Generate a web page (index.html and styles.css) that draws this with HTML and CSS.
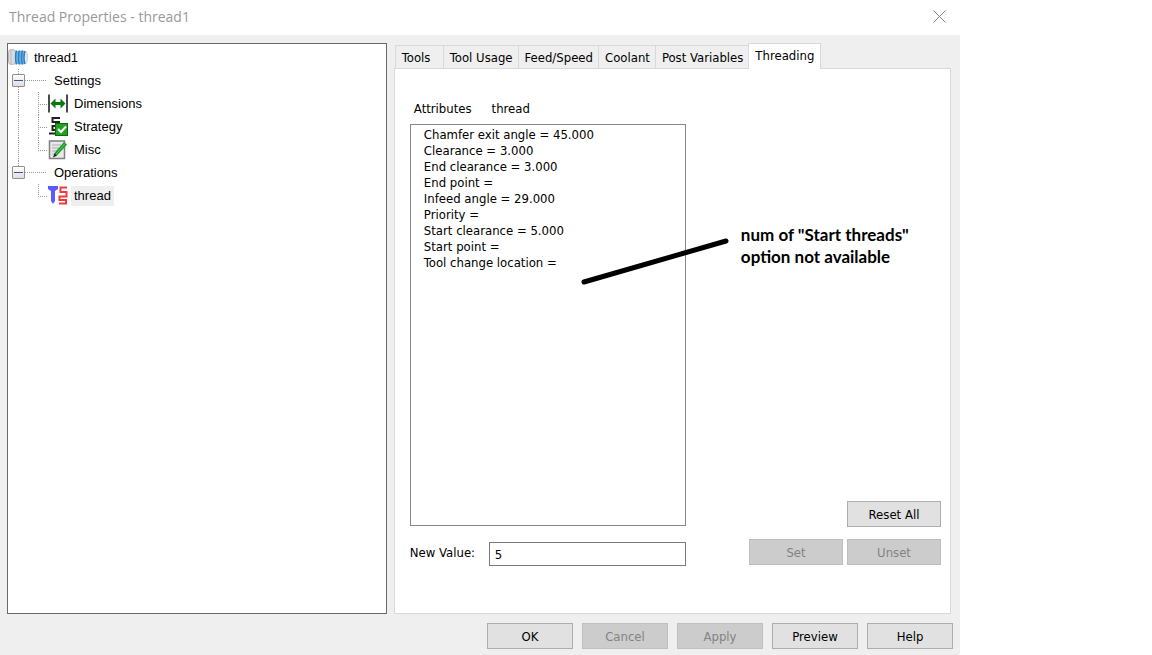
FILE: index.html
```html
<!DOCTYPE html>
<html lang="en">
<head>
  <meta charset="UTF-8" />
  <meta name="viewport" content="width=device-width, initial-scale=1" />
  <title>Thread Properties - thread1</title>
  <link rel="stylesheet" href="styles.css">
</head>
<body>

  <main class="window">
    <header class="title-bar">
      <h1>Thread Properties - thread1</h1>
      <button type="button" class="close" aria-label="Close">
        <svg width="13" height="13" viewBox="0 0 13 13"><path d="M.5 .5l12 12M12.5 .5l-12 12" stroke="#858585" fill="none"/></svg>
      </button>
    </header>

    <div class="content">
      <nav class="tree" aria-label="Features">
        <div class="row">
          <svg class="icon" viewBox="0 0 20 20">
            <rect x="8" y="3" width="11.500" height="13" rx="4" fill="#e4e8ea" stroke="#ccd2d6"/>
            <rect x="0.500" y="1.500" width="7" height="15" rx="3" fill="#dcdcdc" stroke="#b4b4b4"/>
            <path d="M3 2v14" stroke="#b8b8b8"/>
            <path d="M8 3h9q-2 6.500 0 13H8q-2-6.500 0-13z" fill="#6fb4e4"/>
            <path d="M8.500 2.500q-2 7 0 14M11.500 2.500q-2 7 0 14M14.500 2.500q-2 7 0 14M17 3q-2 6.500 0 13" stroke="#2a80c4" stroke-width="1.500" fill="none"/>
          </svg>
          <span class="label">thread1</span>
        </div>
        <ul>
          <li>
            <div class="row group">
              <button type="button" class="expander" aria-label="Collapse Settings"><span class="box"></span></button>
              <span class="dash"></span>
              <span class="label">Settings</span>
            </div>
            <ul>
              <li class="row">
                <span class="pipe"></span><span class="elbow"></span>
                <svg class="icon" viewBox="0 0 20 20">
                  <path d="M1 .5v18M19 .5v18" stroke="#111" stroke-width="1.500"/>
                  <path d="M2.500 9.500l5-5V8h5V4.500l5 5-5 5V11h-5v3.500z" fill="#0a780a"/>
                </svg>
                <span class="label">Dimensions</span>
              </li>
              <li class="row">
                <span class="pipe"></span><span class="elbow"></span>
                <svg class="icon" viewBox="0 0 20 20">
                  <path d="M12 1H4.500V5H11V9H4.500V13H8M1 16.500H8" stroke="#222" stroke-width="2" fill="none"/>
                  <rect x="7.500" y="6.500" width="12" height="12" fill="#22a022" stroke="#0b6b0b"/>
                  <path d="M10 12l3 3 5-5.500" stroke="#fff" stroke-width="2" fill="none"/>
                </svg>
                <span class="label">Strategy</span>
              </li>
              <li class="row">
                <span class="pipe"></span><span class="elbow last"></span>
                <svg class="icon" viewBox="0 0 20 20">
                  <rect x="1.500" y="1" width="15" height="17.500" fill="#e9e9e9" stroke="#808080" stroke-width="1.500"/>
                  <path d="M4 5h9M4 8h7M4 11h5M4 14h3" stroke="#aaa"/>
                  <path d="M16 2l3 2.500L9.500 15l-4 2 1-4z" fill="#159a28"/>
                  <path d="M17 3.500L7.500 15" stroke="#5fd060"/>
                  <path d="M6.500 13.500L5 17.500l4-2z" fill="#222"/>
                </svg>
                <span class="label">Misc</span>
              </li>
            </ul>
          </li>
          <li>
            <div class="row group">
              <button type="button" class="expander end" aria-label="Collapse Operations"><span class="box"></span></button>
              <span class="dash"></span>
              <span class="label">Operations</span>
            </div>
            <ul>
              <li class="row">
                <span class="pipe empty"></span><span class="elbow last"></span>
                <svg class="icon" viewBox="0 0 20 20">
                  <path d="M0 0h10v3L7 5v10l-2 3-2-3V5L0 3z" fill="#5a5aff"/>
                  <path d="M19 1.500h-6.500v4.500H18.500v4.500h-7v3.500H18v3.500h-7" stroke="#f5383d" stroke-width="2" fill="none"/>
                </svg>
                <span class="label selected">thread</span>
              </li>
            </ul>
          </li>
        </ul>
      </nav>

      <section class="pages">
        <div class="tabs" role="tablist">
          <button type="button" role="tab">Tools</button>
          <button type="button" role="tab">Tool Usage</button>
          <button type="button" role="tab">Feed/Speed</button>
          <button type="button" role="tab">Coolant</button>
          <button type="button" role="tab">Post Variables</button>
          <button type="button" role="tab" class="active" aria-selected="true">Threading</button>
        </div>

        <div class="page" role="tabpanel">
          <div class="attributes">
            <div class="heading">
              <label for="attribute-list">Attributes</label>
              <span>thread</span>
            </div>
            <select id="attribute-list" class="list" size="9">
              <option>Chamfer exit angle = 45.000</option>
              <option>Clearance = 3.000</option>
              <option>End clearance = 3.000</option>
              <option>End point =</option>
              <option>Infeed angle = 29.000</option>
              <option>Priority =</option>
              <option>Start clearance = 5.000</option>
              <option>Start point =</option>
              <option>Tool change location =</option>
            </select>
            <div class="new-value">
              <label for="new-value">New Value:</label>
              <input type="text" id="new-value" value="5" />
            </div>
          </div>

          <div class="actions">
            <button type="button" class="btn">Reset All</button>
            <div class="pair">
              <button type="button" class="btn" disabled>Set</button>
              <button type="button" class="btn" disabled>Unset</button>
            </div>
          </div>

          <!-- note drawn over the page -->
          <div class="note">
            <svg width="150" height="50" viewBox="0 0 150 50"><path d="M4 45L146 4" stroke="#000" stroke-width="5" stroke-linecap="round"/></svg>
            <p>num of "Start threads"<br>option not available</p>
          </div>
        </div>
      </section>
    </div>

    <footer class="buttons">
      <button type="button" class="btn">OK</button>
      <button type="button" class="btn" disabled>Cancel</button>
      <button type="button" class="btn" disabled>Apply</button>
      <button type="button" class="btn">Preview</button>
      <button type="button" class="btn">Help</button>
    </footer>
  </main>

</body>
</html>
```
FILE: styles.css
```css
* {
  box-sizing: border-box;
}

body {
  margin: 0;
  display: grid;
  grid-template-columns: 5fr 1fr;
  min-height: 100vh;
  background: #fff;
  color: #000;
  font-family: "DejaVu Sans Condensed", "DejaVu Sans", sans-serif;
  font-size: 13px;
  line-height: 16px;
}

button,
input,
select {
  font: inherit;
  color: inherit;
  margin: 0;
}

ul {
  list-style: none;
  margin: 0;
  padding: 0;
}

.window {
  display: flex;
  flex-direction: column;
  background: #efefef;
}

/* title bar */
.title-bar {
  display: flex;
  align-items: center;
  justify-content: space-between;
  height: 35px;
  padding: 0 14px 2px 9px;
  background: #fff;
}

.title-bar h1 {
  margin: 0;
  font-family: "Open Sans", "Noto Sans", sans-serif;
  font-size: 14px;
  font-weight: 400;
  color: #999;
}

.close {
  display: flex;
  padding: 0;
  border: none;
  background: none;
}

.content {
  flex: 1;
  display: grid;
  grid-template-columns: 15fr 22fr;
  gap: 7px;
  padding: 8px 9px 9px 7px;
}

/* feature tree */
.tree {
  padding-top: 2px;
  border: 1px solid #696969;
  background: #fff;
  font-family: "Liberation Sans", Arial, sans-serif;
  font-size: 13px;
}

.row {
  display: flex;
  align-items: center;
  height: 23px;
}

.row.group {
  padding-left: 4px;
}

.icon {
  width: 20px;
  height: 20px;
  margin-right: 3px;
}

.label {
  padding: 2px 3px;
}

.label.selected {
  background: #efefef;
}

.pipe,
.elbow,
.expander {
  align-self: stretch;
  background: repeating-linear-gradient(#999 0 1px, transparent 1px 2px) 0 0 / 1px 100% no-repeat;
}

.pipe {
  width: 20px;
  margin-left: 10px;
}

.pipe.empty {
  background: none;
}

.elbow {
  width: 10px;
  background:
    repeating-linear-gradient(#999 0 1px, transparent 1px 2px) 0 0 / 1px 100% no-repeat,
    repeating-linear-gradient(to right, #999 0 1px, transparent 1px 2px) 0 12px / 9px 1px no-repeat;
}

.elbow.last {
  background-size: 1px 12px, 9px 1px;
}

.expander {
  display: flex;
  align-items: center;
  width: 13px;
  padding: 0;
  border: none;
  background-position: 6px 0;
}

.expander.end {
  background-size: 1px 12px;
}

.box {
  width: 13px;
  height: 13px;
  border: 1px solid #919191;
  border-radius: 1px;
  background:
    linear-gradient(#3b55a5, #3b55a5) 50% 50% / 9px 1px no-repeat,
    linear-gradient(#fff, #ddd);
}

.dash {
  width: 23px;
  height: 1px;
  margin-right: 3px;
  background: repeating-linear-gradient(to right, #999 0 1px, transparent 1px 2px) 0 0 / 22px 1px no-repeat;
}

/* tabs */
.pages {
  display: flex;
  flex-direction: column;
}

.tabs {
  display: flex;
  align-items: flex-end;
  padding-left: 1px;
}

.tabs button {
  height: 23px;
  min-width: 48px;
  padding: 1px 5px 0 6px;
  border: 1px solid #d9d9d9;
  border-width: 1px 0 0 1px;
  background: #efefef;
  text-align: left;
  white-space: nowrap;
}

.tabs button.active {
  z-index: 1;
  height: 26px;
  margin-bottom: -1px;
  padding: 0 6px 2px;
  border-width: 1px 1px 0;
  background: #fff;
}

.page {
  position: relative;
  flex: 1;
  display: grid;
  grid-template-columns: 52% 1fr;
  padding: 32px 9px 47px 15px;
  border: 1px solid #d9d9d9;
  background: #fff;
}

.attributes {
  display: flex;
  flex-direction: column;
}

.heading {
  display: flex;
  gap: 20px;
  padding: 0 4px 7px;
}

.list {
  flex: 1;
  padding: 2px 0;
  border: 1px solid #828790;
  border-radius: 0;
  background: #fff;
}

.list option {
  min-height: 16px;
  padding: 0 13px;
}

.new-value {
  display: flex;
  align-items: center;
  padding-top: 16px;
}

.new-value label {
  flex: 0 0 79px;
  padding-bottom: 2px;
}

.new-value input {
  flex: 1;
  min-width: 0;
  height: 24px;
  padding: 0 5px;
  border: 1px solid #7a7a7a;
}

/* push buttons */
.btn {
  width: 94px;
  height: 26px;
  padding: 1px 0 0;
  border: 1px solid #adadad;
  background: #e1e1e1;
}

.btn:disabled {
  border-color: #bfbfbf;
  background: #ccc;
  color: #838383;
}

.actions {
  display: flex;
  flex-direction: column;
  align-items: flex-end;
  justify-content: flex-end;
  gap: 12px;
  padding-bottom: 1px;
}

.pair {
  display: flex;
  gap: 4px;
}

.buttons {
  display: flex;
  justify-content: flex-end;
  gap: 9px;
  padding: 0 7px 6px;
}

.buttons .btn {
  width: 86px;
}

.note {
  position: absolute;
  top: 155px;
  left: 185px;
  display: flex;
  align-items: flex-start;
  gap: 11px;
  font-family: Lato, "Open Sans", sans-serif;
  font-size: 17px;
  font-weight: 700;
  line-height: 22px;
  pointer-events: none;
}

.note svg {
  margin-top: 13px;
}

.note p {
  margin: 0;
}
```
